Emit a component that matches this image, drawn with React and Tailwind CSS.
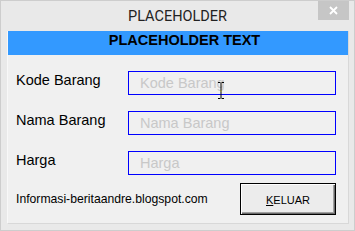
import React from "react";

const F = { fontFamily: '"Liberation Sans", Arial, sans-serif' };

function Row({ label }) {
  return (
    <div className="flex items-start h-[24px]">
      <div className="w-[120px] pl-[8px] mt-[1px] text-[14.5px] leading-[16px] text-black">{label}</div>
      <input
        readOnly
        placeholder={label}
        className="w-[208px] h-[24px] border border-[#0000ff] bg-[#f0f0f0] pl-[11px] text-[14.5px] outline-none placeholder:text-[#c8c8c8]"
        style={F}
      />
    </div>
  );
}

export default function App() {
  return (
    <div
      className="relative w-[355px] h-[231px] bg-[#e9e9e9] border border-[#cdcdcd] flex flex-col overflow-hidden"
      style={F}
    >
      <div className="relative h-[30px] flex items-center justify-center">
        <span
          className="text-[14.5px] text-[#222] mt-[1px]"
          style={{ fontFamily: 'Roboto, "Liberation Sans", sans-serif' }}
        >
          PLACEHOLDER
        </span>
        <div className="absolute top-0 right-[5px] w-[31px] h-[19px] bg-[#c6c6c6] flex items-center justify-center">
          <svg width="9" height="9" viewBox="0 0 9 9">
            <path d="M1 1L8 8M8 1L1 8" stroke="#ffffff" strokeWidth="1.8" />
          </svg>
        </div>
      </div>
      <div className="ml-[6px] w-[342px] h-[193px] bg-[#f0f0f0] border-l border-r border-b border-l-[#f8f8f8] border-r-[#d8d8d8] border-b-[#d8d8d8] flex flex-col">
        <div className="h-[24px] bg-[#3399ff] pl-[13px] text-center text-[14.5px] leading-[18px] font-bold text-black">
          PLACEHOLDER TEXT
        </div>
        <div className="mt-[16px] flex flex-col gap-[16px]">
          <Row label="Kode Barang" />
          <Row label="Nama Barang" />
          <Row label="Harga" />
        </div>
        <div className="mt-[8px] flex items-center justify-between pr-[12px]">
          <span className="pl-[8px] text-[12.2px] text-black">Informasi-beritaandre.blogspot.com</span>
          <button className="w-[96px] h-[32px] border border-black bg-[#ececec] shadow-[inset_1px_1px_0_#ffffff,inset_-1px_-1px_0_#696969,inset_-2px_-2px_0_#a0a0a0] text-[11px] text-black flex items-center justify-center pt-[2px]" style={F}>
            <span><span className="underline">K</span>ELUAR</span>
          </button>
        </div>
      </div>
      <svg className="absolute left-[216px] top-[81px]" width="8" height="17" viewBox="0 0 8 17">
        <path d="M1 0.5H3.5M4.5 0.5H7M4 1V16M1 16.5H3.5M4.5 16.5H7" stroke="#000" strokeWidth="1" />
        <path d="M3.5 9H4.5" stroke="#e0d000" strokeWidth="1" />
      </svg>
    </div>
  );
}
